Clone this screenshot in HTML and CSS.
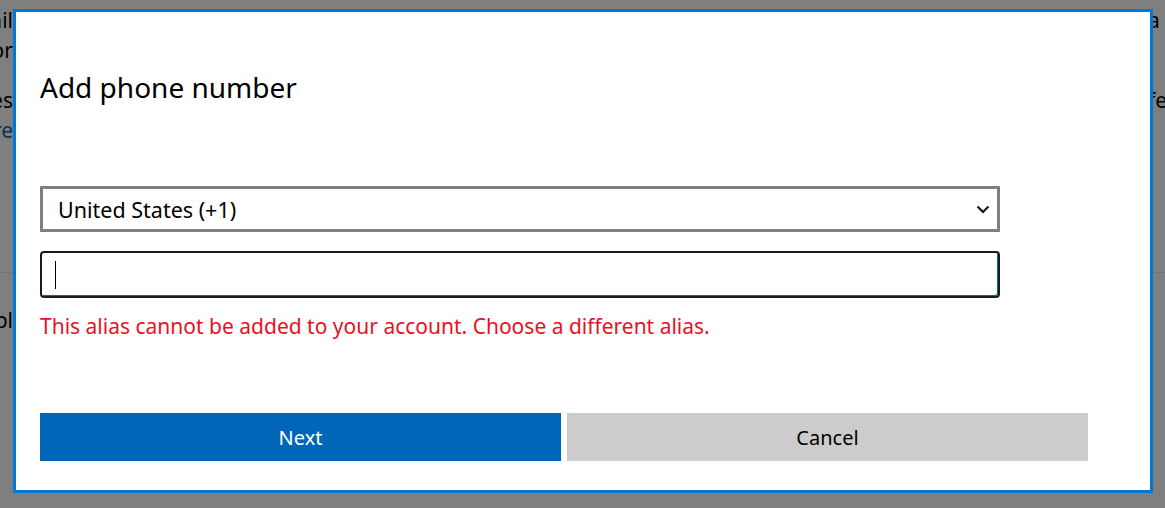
FILE: index.html
```html
<!DOCTYPE html>
<html lang="en">
  <head>
    <meta charset="UTF-8" />
    <meta name="viewport" content="width=device-width, initial-scale=1.0" />
    <title>Add phone number</title>
    <link rel="stylesheet" href="styles.css">
  </head>

  <body>
    <!-- page behind the dialog -->
    <div class="page">
      <div class="page-row">
        <span class="left-bit">Email</span>
        <span class="right-bit">a</span>
      </div>
      <div class="page-row">
        <span class="left-bit">Phone or</span>
        <span class="right-bit"></span>
      </div>
      <div class="page-row gap-top">
        <span class="left-bit">Aliases</span>
        <span class="right-bit">fe</span>
      </div>
      <div class="page-row">
        <span class="left-bit link">More</span>
        <span class="right-bit"></span>
      </div>
      <hr class="page-rule">
      <div class="page-row">
        <span class="left-bit">Sign-in pl</span>
        <span class="right-bit"></span>
      </div>
    </div>

    <div class="overlay"></div>

    <div class="dialog">
      <h1 class="dialog-title">Add phone number</h1>

      <div class="field-select">
        <span>United States (+1)</span>
        <svg class="chevron" width="14" height="9" viewBox="0 0 14 9">
          <path d="M1.5 1.5 L7 7 L12.5 1.5" fill="none" stroke="#111" stroke-width="2.2"/>
        </svg>
      </div>

      <div class="field-input">
        <span class="caret"></span>
      </div>

      <p class="error">This alias cannot be added to your account. Choose a different alias.</p>

      <div class="actions">
        <button class="btn btn-next">Next</button>
        <button class="btn btn-cancel">Cancel</button>
      </div>
    </div>
  </body>
</html>
```

FILE: styles.css
```css
/* whole page */
body {
  margin: 0;
  height: 100vh;
  overflow: hidden;
  background: #ffffff;
  font-family: "Noto Sans", "Open Sans", sans-serif;
  color: #000;
}

/* the page that sits under the dimmed overlay */
.page {
  padding-top: 5px;
  font-size: 21px;
  line-height: 30px;
}

.page-row {
  display: flex;
  justify-content: space-between;
}

.gap-top {
  margin-top: 20px;
}

.left-bit {
  width: 13px;
  display: flex;
  justify-content: flex-end;
  white-space: nowrap;
}

.right-bit {
  width: 17px;
  white-space: nowrap;
  overflow: hidden;
}

.link {
  color: #0067b8;
}

.page-rule {
  border: none;
  border-top: 1px solid #e6e6e6;
  margin: 127px 0 32px;
}

.overlay {
  position: fixed;
  inset: 0;
  background: rgba(0, 0, 0, 0.5);
}

/* dialog box */
.dialog {
  position: fixed;
  top: 9px;
  left: 13px;
  width: 1140px;
  height: 484px;
  box-sizing: border-box;
  border: 3px solid #0078d7;
  background: #fff;
  padding: 0 24px;
}

.dialog-title {
  margin: 57px 0 0;
  font-size: 28px;
  font-weight: 400;
  line-height: 36px;
}

.field-select {
  margin-top: 81px;
  width: 960px;
  height: 46px;
  box-sizing: border-box;
  border: 3px solid #808080;
  display: flex;
  align-items: center;
  justify-content: space-between;
  padding: 0 7px 0 15px;
  font-size: 21.5px;
}

.chevron {
  margin-top: 1px;
}

.field-input {
  margin-top: 19px;
  width: 960px;
  height: 47px;
  box-sizing: border-box;
  border: 2px solid #1b1b1b;
  border-radius: 4px;
  box-shadow: inset -1px -1px 0 #0067b8;
  display: flex;
  align-items: center;
}

.caret {
  width: 1px;
  height: 28px;
  margin-left: 13px;
  background: #000;
}

.error {
  margin: 14px 0 0;
  font-size: 21px;
  line-height: 28px;
  color: #e81123;
}

.actions {
  margin-top: 73px;
  display: flex;
  gap: 6px;
}

.btn {
  width: 521px;
  height: 48px;
  border: none;
  font-family: inherit;
  font-size: 20px;
  cursor: pointer;
}

.btn-next {
  background: #0067b8;
  color: #fff;
}

.btn-cancel {
  background: #cccccc;
  color: #000;
}
```
